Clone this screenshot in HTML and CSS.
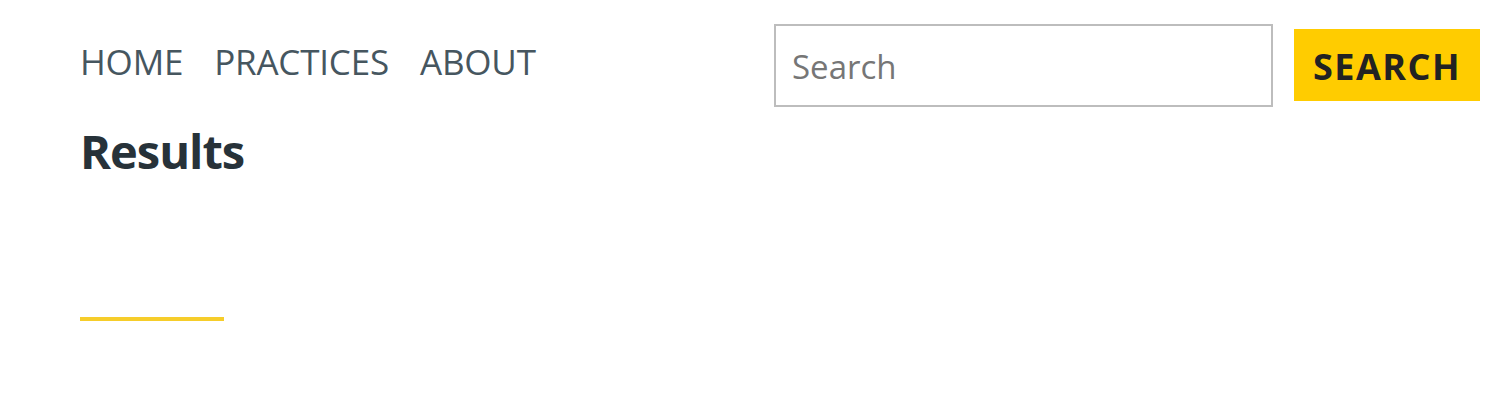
FILE: index.html
```html
<!DOCTYPE html>
<html lang="en">
<head>
<meta charset="utf-8">
<title>Results</title>
<link rel="stylesheet" href="styles.css">
</head>
<body>
<header class="header">
  <nav class="nav">
    <a class="nav-link" href="#">HOME</a>
    <a class="nav-link" href="#">PRACTICES</a>
    <a class="nav-link" href="#">ABOUT</a>
  </nav>
  <form class="search">
    <input class="search-input" type="text" placeholder="Search">
    <button class="search-btn" type="button">SEARCH</button>
  </form>
</header>
<main class="main">
  <h1 class="title">Results</h1>
  <div class="rule"></div>
</main>
</body>
</html>
```
FILE: styles.css
```css
html, body {
  margin: 0;
  padding: 0;
  background: #ffffff;
}
body {
  font-family: "Open Sans", "Noto Sans", sans-serif;
}
.header {
  display: flex;
  justify-content: space-between;
  align-items: flex-start;
  padding: 24px 31px 0 80px;
}
.nav {
  display: flex;
  gap: 31px;
  margin-top: 17px;
}
.nav-link {
  font-size: 35px;
  font-weight: 400;
  line-height: 1.2;
  color: #46565f;
  text-decoration: none;
  letter-spacing: -0.2px;
}
.search {
  display: flex;
  align-items: flex-start;
  gap: 21px;
}
.search-input {
  box-sizing: border-box;
  width: 499px;
  height: 83px;
  border: 2px solid #bdbdbd;
  padding: 2px 16px 0;
  font-family: "Open Sans", "Noto Sans", sans-serif;
  font-size: 33px;
  color: #333;
  outline: none;
}
.search-input::placeholder {
  color: #767676;
}
.search-btn {
  box-sizing: border-box;
  margin-top: 5px;
  width: 186px;
  height: 72px;
  border: none;
  background: #ffcc00;
  color: #222222;
  font-family: "Open Sans", "Noto Sans", sans-serif;
  font-size: 36px;
  font-weight: 700;
  letter-spacing: 1.5px;
  padding: 2px 0 0;
}
.main {
  padding: 0 80px;
}
.title {
  margin: 16px 0 0;
  font-size: 47px;
  font-weight: 700;
  line-height: 1.2;
  color: #273239;
  letter-spacing: -1px;
}
.rule {
  margin-top: 138px;
  width: 144px;
  height: 4px;
  background: #f6cd2a;
}
```
